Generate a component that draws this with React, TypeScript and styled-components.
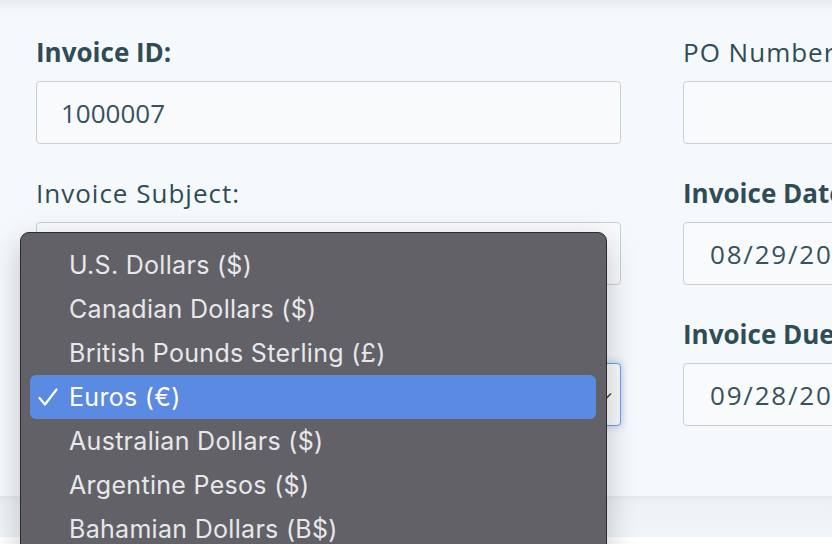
import React from 'react';
import styled, { createGlobalStyle } from 'styled-components';

const GlobalStyle = createGlobalStyle`
  html, body {
    margin: 0;
    padding: 0;
    background: #ffffff;
    overflow: hidden;
  }
`;

type Currency = {
  label: string,
  selected?: boolean
}

const currencies: Currency[] = [
  { label: 'U.S. Dollars ($)' },
  { label: 'Canadian Dollars ($)' },
  { label: 'British Pounds Sterling (£)' },
  { label: 'Euros (€)', selected: true },
  { label: 'Australian Dollars ($)' },
  { label: 'Argentine Pesos ($)' },
  { label: 'Bahamian Dollars (B$)' },
];

const App: React.FC = () => {
  return (
    <Page>
      <GlobalStyle />
      <Card>
        <FormGrid>
          <Field>
            <Label $bold>Invoice ID:</Label>
            <Input>1000007</Input>
          </Field>
          <Field>
            <Label>PO Number</Label>
            <Input />
          </Field>
          <Field>
            <Label>Invoice Subject:</Label>
            <Input />
          </Field>
          <Field>
            <Label $bold>Invoice Date</Label>
            <Input $date>08/29/2023</Input>
          </Field>
          <Field>
            <Label $bold>Currency</Label>
            <Input $focused>
              Euros (€)
              <Chevron viewBox="0 0 12 8">
                <path d="M1 1.5 L6 6.5 L11 1.5" />
              </Chevron>
            </Input>
          </Field>
          <Field>
            <Label $bold>Invoice Due</Label>
            <Input $date>09/28/2023</Input>
          </Field>
        </FormGrid>
      </Card>
      <Footer />

      <Menu>
        {currencies.map((c) => (
          <MenuItem key={c.label} $selected={c.selected}>
            <CheckSlot>
              {c.selected && (
                <CheckMark viewBox="0 0 20 18">
                  <path d="M1.5 10 L7 16.5 L18.5 1.5" />
                </CheckMark>
              )}
            </CheckSlot>
            {c.label}
          </MenuItem>
        ))}
      </Menu>
    </Page>
  );
};

const Page = styled.div`
  position: relative;
  width: 832px;
  height: 544px;
  overflow: hidden;
  font-family: "Open Sans", "Noto Sans", sans-serif;
`;

const Card = styled.div`
  height: 459px;
  padding-top: 37px;
  background: #f6f9fb;
  box-shadow: inset 0 14px 14px -10px rgba(0, 0, 0, 0.07);
`;

const Footer = styled.div`
  height: 41px;
  background: linear-gradient(#edf1f4, #f1f5f7);
  box-shadow: inset 0 6px 8px -6px rgba(0, 0, 0, 0.07);
`;

const FormGrid = styled.div`
  display: grid;
  grid-template-columns: 585px 585px;
  column-gap: 62px;
  row-gap: 34px;
  padding-left: 36px;
`;

const Field = styled.div`
  display: flex;
  flex-direction: column;
  gap: 14px;
`;

const Label = styled.div<{ $bold?: boolean }>`
  font-size: 26px;
  line-height: 30px;
  font-weight: ${(p) => (p.$bold ? 700 : 500)};
  letter-spacing: ${(p) => (p.$bold ? '0' : '1px')};
  color: #2f4d57;
  white-space: nowrap;
`;

const Input = styled.div<{ $focused?: boolean, $date?: boolean }>`
  position: relative;
  box-sizing: border-box;
  height: 63px;
  display: flex;
  align-items: center;
  padding-left: ${(p) => (p.$date ? '26px' : '24px')};
  font-size: 26px;
  color: #36525c;
  letter-spacing: ${(p) => (p.$date ? '1.8px' : '0')};
  background: #f8fafc;
  border: 1.5px solid ${(p) => (p.$focused ? '#6b9fe2' : '#c6d1d7')};
  border-radius: 4px;
  box-shadow: ${(p) => (p.$focused ? '0 0 6px 2px rgba(107, 159, 226, 0.35)' : 'none')};
  white-space: nowrap;
  overflow: hidden;
`;

const Chevron = styled.svg`
  position: absolute;
  right: 8px;
  top: 28px;
  width: 12px;
  height: 8px;
  fill: none;
  stroke: #36525c;
  stroke-width: 1.6;
`;

const Menu = styled.div`
  position: absolute;
  left: 20px;
  top: 232px;
  width: 587px;
  height: 360px;
  box-sizing: border-box;
  padding: 10px 10px 0 9px;
  background: #616167;
  border: 1px solid #2c2c30;
  border-radius: 9px;
  box-shadow: 0 10px 30px rgba(0, 0, 0, 0.22);
  font-family: Inter, "Noto Sans", sans-serif;
`;

const MenuItem = styled.div<{ $selected?: boolean }>`
  display: flex;
  align-items: center;
  height: 44px;
  border-radius: 6px;
  font-size: 25px;
  letter-spacing: 0.3px;
  color: ${(p) => (p.$selected ? '#ffffff' : '#e8e8ea')};
  background: ${(p) => (p.$selected ? '#5b8ae2' : 'transparent')};
  white-space: nowrap;
`;

const CheckSlot = styled.span`
  display: flex;
  align-items: center;
  width: 39px;
  padding-left: 8px;
  box-sizing: border-box;
`;

const CheckMark = styled.svg`
  width: 20px;
  height: 18px;
  fill: none;
  stroke: #ffffff;
  stroke-width: 2.2;
  stroke-linecap: round;
  stroke-linejoin: round;
`;

export default App;
